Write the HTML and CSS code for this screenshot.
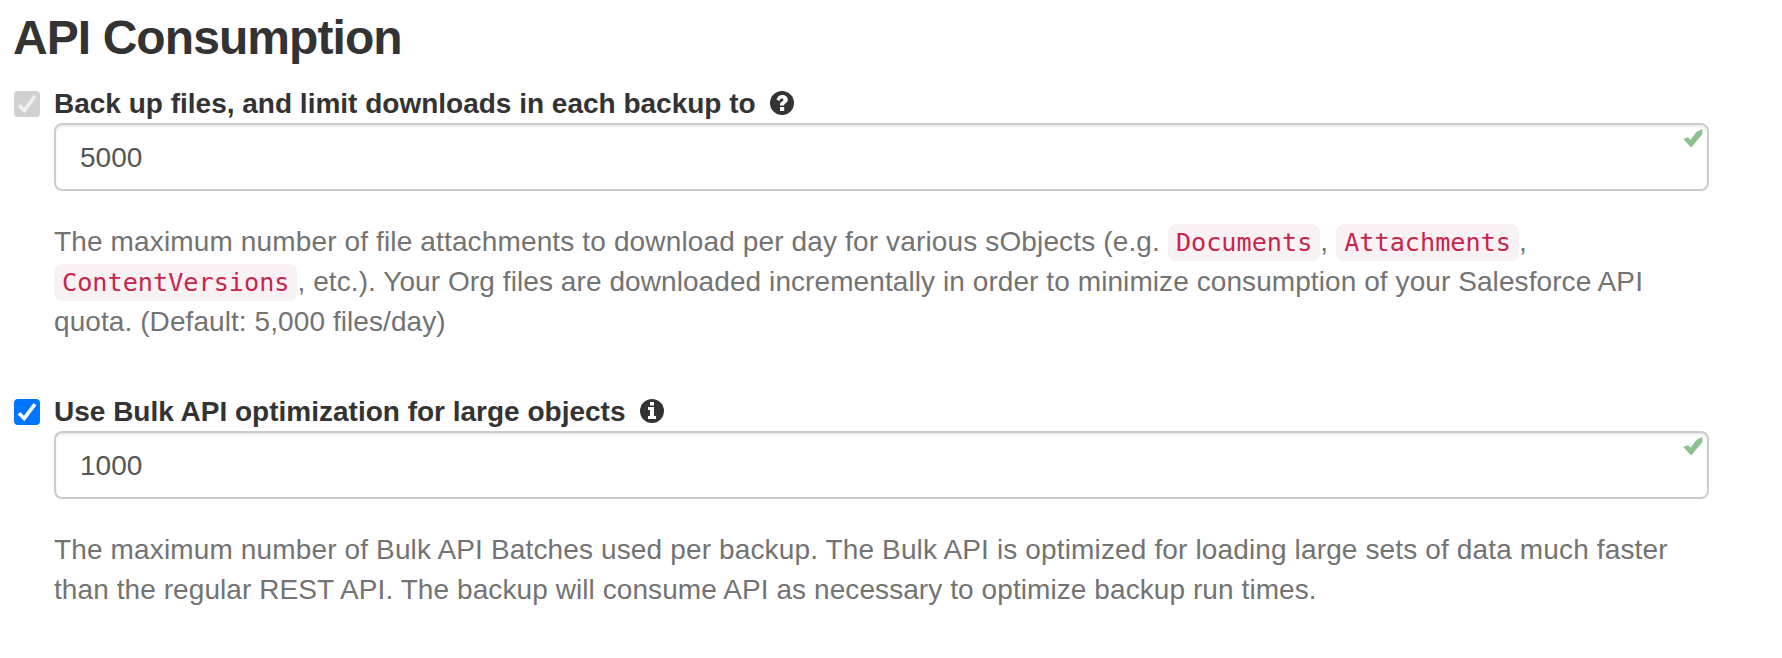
FILE: index.html
```
<!DOCTYPE html>
<html lang="en">
<head>
    <meta charset="UTF-8">
    <meta name="viewport" content="width=device-width, initial-scale=1.0">
    <title>API Consumption</title>
    <link rel="stylesheet" href="styles.css">
</head>
<body>
    <h3 class="section-title">API Consumption</h3>

    <div class="form-group">
        <div class="option-row">
            <svg class="checkbox disabled" viewBox="0 0 26 26">
                <rect width="26" height="26" rx="4" />
                <path d="M5 14.2L10.2 19.4L21 5.2" />
            </svg>
            <label class="option-label" for="file-limit">Back up files, and limit downloads in each backup to</label>
            <svg class="icon" viewBox="0 0 24 24">
                <circle cx="12" cy="12" r="12" />
                <path class="mark" d="M6.4 8.4C7.8 5.4 9.6 4 12.2 4C15.4 4 17.8 6 17.8 8.8C17.8 12 14.2 12.3 14.2 14V14.6H10V13.4C10 10.7 13.4 10.3 13.4 8.9C13.4 8.1 12.8 7.6 11.9 7.6C10.8 7.6 10.2 8.4 9.4 10ZM10 16H14.2V20H10Z" />
            </svg>
        </div>
        <div class="field">
            <input type="text" id="file-limit" class="form-control" value="5000">
            <svg class="valid" viewBox="0 0 22 22">
                <path d="M1.2 11L6 9.2L8.6 11.8L14.4 4L20.2 1L20.4 6L9.2 19.4Z" />
            </svg>
        </div>
        <p class="help-block">The maximum number of file attachments to download per day for various sObjects (e.g. <code>Documents</code>, <code>Attachments</code>, <span class="tight"><code>ContentVersions</code>, etc.). Your Org files are downloaded incrementally in order to minimize consumption of your Salesforce API quota. (Default: 5,000 files/day)</span></p>
    </div>

    <div class="form-group">
        <div class="option-row">
            <svg class="checkbox" viewBox="0 0 26 26">
                <rect width="26" height="26" rx="4" />
                <path d="M5 14.2L10.2 19.4L21 5.2" />
            </svg>
            <label class="option-label" for="batch-limit">Use Bulk API optimization for large objects</label>
            <svg class="icon" viewBox="0 0 24 24">
                <circle cx="12" cy="12" r="12" />
                <path class="mark" d="M10 3H14V6.4H10ZM8 8H14V17H16V20H8V17H10V11H8Z" />
            </svg>
        </div>
        <div class="field">
            <input type="text" id="batch-limit" class="form-control" value="1000">
            <svg class="valid" viewBox="0 0 22 22">
                <path d="M1.2 11L6 9.2L8.6 11.8L14.4 4L20.2 1L20.4 6L9.2 19.4Z" />
            </svg>
        </div>
        <p class="help-block">The maximum number of Bulk API Batches used per backup. The Bulk API is optimized for loading large sets of data much faster <span class="tight">than the regular REST API. The backup will consume API as necessary to optimize backup run times.</span></p>
    </div>
</body>
</html>
```
FILE: styles.css
```
* {
    box-sizing: border-box;
}

body {
    margin: 0;
    padding: 11px 73px 0 14px;
    font-family: "Liberation Sans", Arial, sans-serif;
    font-size: 28px;
    line-height: 40px;
    color: #333;
    background-color: #fff;
}

.section-title {
    margin: 0 0 19px -1px;
    font-size: 48px;
    font-weight: bold;
    line-height: 53px;
    letter-spacing: -0.93px;
}

.form-group {
    margin-bottom: 49px;
}

.option-row {
    display: flex;
    align-items: center;
    height: 40px;
}

.checkbox {
    width: 26px;
    height: 26px;
    margin: 2px 14px 0 0;
    flex: none;
    fill: #0075ff;
}

.checkbox path {
    fill: none;
    stroke: #fff;
    stroke-width: 3.6;
}

.checkbox.disabled {
    fill: #d1d1d1;
}

.checkbox.disabled path {
    stroke: #f0f0f0;
}

.option-label {
    margin-top: 2px;
    font-weight: bold;
    white-space: nowrap;
}

.icon {
    width: 24px;
    height: 24px;
    margin-left: 14px;
    fill: #333;
}

.icon .mark {
    fill: #fff;
}

.field {
    position: relative;
    margin-left: 40px;
}

.form-control {
    display: block;
    width: 100%;
    height: 68px;
    padding: 13px 24px 12px;
    border: 2px solid #ccc;
    border-radius: 8px;
    font-family: inherit;
    font-size: 28px;
    color: #555;
    background-color: #fff;
    box-shadow: inset 0 2px 2px rgba(0, 0, 0, 0.075);
}

/* validation mark in the corner of the field */
.valid {
    position: absolute;
    top: 5px;
    right: 5px;
    width: 22px;
    height: 22px;
    fill: #8cc08c;
    filter: blur(0.6px);
}

.help-block {
    margin: 31px 0 0 40px;
    color: #737373;
    letter-spacing: 0.14px;
}

.tight {
    letter-spacing: 0.08px;
}

code {
    padding: 4px 8px;
    border-radius: 8px;
    font-family: "DejaVu Sans Mono", monospace;
    font-size: 25.2px;
    line-height: 1;
    letter-spacing: 0;
    color: #c7254e;
    background-color: #f9f2f4;
}
```
